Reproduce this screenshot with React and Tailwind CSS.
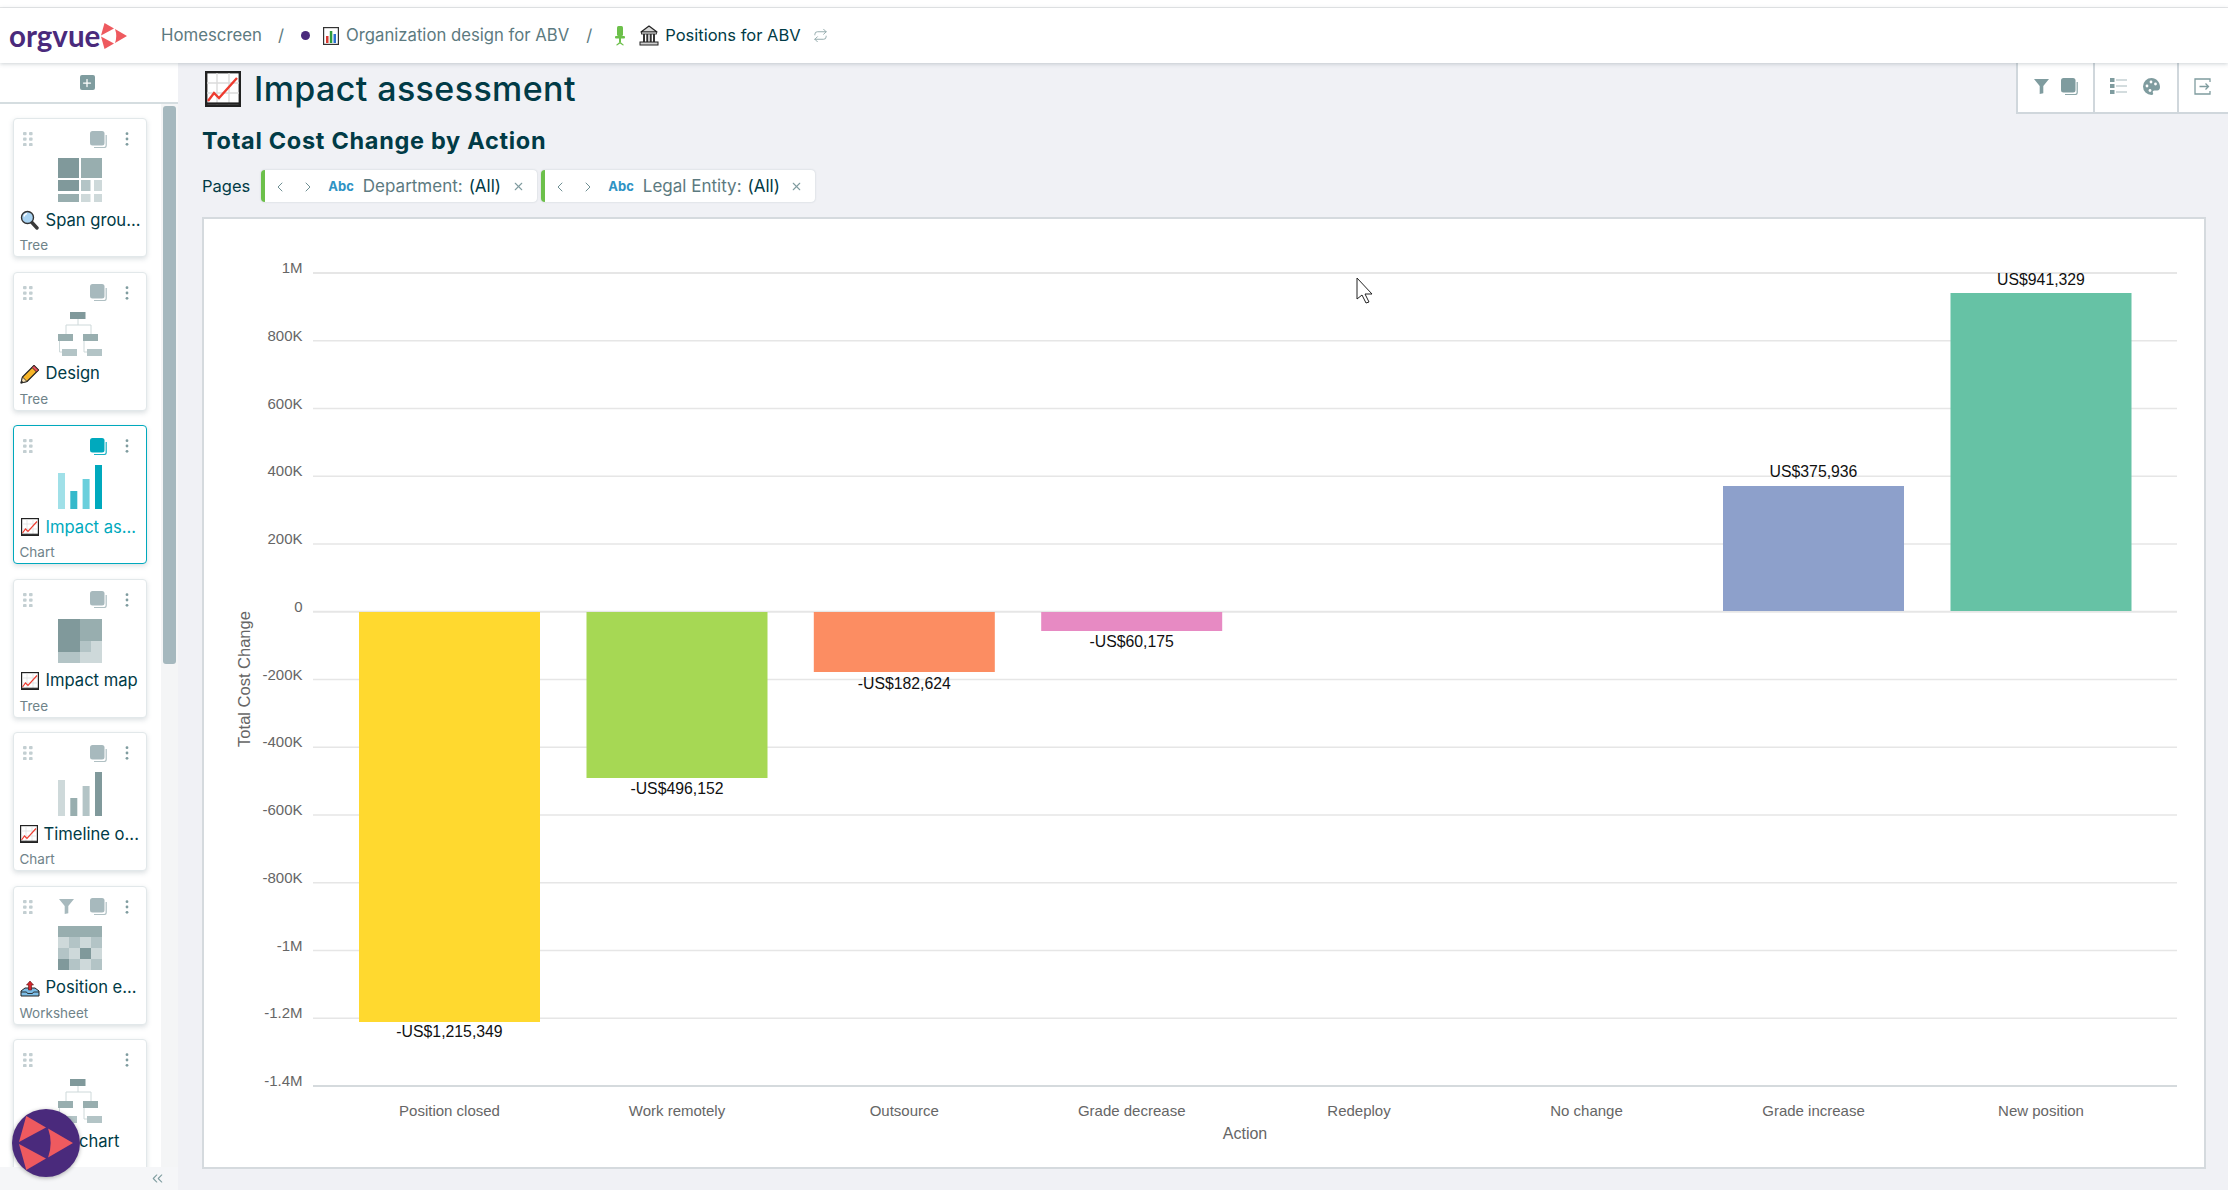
import { ChevronLeft, ChevronRight, ChevronsLeft, Plus, Repeat, X } from "lucide-react";

const D = "#80999b";
const M = "#98aeaf";
const L = "#b3c4c6";
const P = "#ced9da";

const gridLines = [
  ["1M", 273, 2], ["800K", 340.75], ["600K", 408.5], ["400K", 476.25], ["200K", 544], ["0", 611.75, 2],
  ["-200K", 679.5], ["-400K", 747.25], ["-600K", 815], ["-800K", 882.75], ["-1M", 950.5], ["-1.2M", 1018.25], ["-1.4M", 1086, 2],
];

const bars = [
  { name: "Position closed", color: "#ffd92f", x: 359, y: 612, h: 410, label: "-US$1,215,349", ly: 1037 },
  { name: "Work remotely", color: "#a6d854", x: 586.5, y: 612, h: 166, label: "-US$496,152", ly: 793.5 },
  { name: "Outsource", color: "#fc8d62", x: 813.8, y: 612, h: 60, label: "-US$182,624", ly: 688.5 },
  { name: "Grade decrease", color: "#e78ac3", x: 1041.2, y: 612, h: 19, label: "-US$60,175", ly: 647 },
  { name: "Redeploy", x: 1268.5 },
  { name: "No change", x: 1496 },
  { name: "Grade increase", color: "#8da0cb", x: 1723, y: 486, h: 125, label: "US$375,936", ly: 476.5 },
  { name: "New position", color: "#66c2a5", x: 1950.5, y: 293, h: 318, label: "US$941,329", ly: 284.5 },
];

function Grip() {
  return (
    <svg width="10" height="14" viewBox="0 0 10 14" fill="#c3cfd2">
      {[0, 5.5, 11].map((y) => (
        <g key={y}>
          <rect x="0" y={y} width="3.6" height="3.2" rx="1" />
          <rect x="6" y={y} width="3.6" height="3.2" rx="1" />
        </g>
      ))}
    </svg>
  );
}

function Copy({ color = "#a7b9bd", size = 17 }) {
  return (
    <svg width={size} height={size} viewBox="0 0 17 17">
      <path d="M16.2 4v10.5a2 2 0 0 1-2 2H4" fill="none" stroke={color} strokeOpacity="0.9" strokeWidth="1.2" />
      <rect x="0" y="0" width="14.5" height="14.5" rx="2.5" fill={color} />
    </svg>
  );
}

function Dots() {
  return (
    <svg width="4" height="14" viewBox="0 0 4 14" fill="#7f9c9f">
      <circle cx="2" cy="1.7" r="1.4" />
      <circle cx="2" cy="7" r="1.4" />
      <circle cx="2" cy="12.3" r="1.4" />
    </svg>
  );
}

function Funnel({ color = "#a7b9bd", w = 15, h = 15 }) {
  return (
    <svg width={w} height={h} viewBox="0 0 15 15">
      <path d="M0 0h15L9.3 7v7.2L5.7 15V7z" fill={color} />
    </svg>
  );
}

function ThumbTreemap() {
  return (
    <svg width="44" height="44" viewBox="0 0 44 44">
      <rect x="0" y="0" width="21" height="20" fill={D} />
      <rect x="23" y="0" width="21" height="20" fill={M} />
      <rect x="0" y="22" width="21" height="11" fill={D} />
      <rect x="23" y="22" width="9.5" height="11" fill={L} />
      <rect x="36" y="22" width="8" height="11" fill={P} />
      <rect x="0" y="36" width="21" height="8" fill={M} />
      <rect x="23" y="36" width="9.5" height="8" fill={P} />
      <rect x="36" y="36" width="8" height="8" fill={P} />
    </svg>
  );
}

function ThumbTree() {
  return (
    <svg width="44" height="44" viewBox="0 0 44 44">
      <path d="M20 7v6M8 22v-9h25v9M1.5 29v11h4M26 29v11h4" fill="none" stroke={P} strokeWidth="1" />
      <rect x="12" y="0" width="15.5" height="7" fill={D} />
      <rect x="0" y="22" width="15" height="7" fill={M} />
      <rect x="25" y="22" width="15" height="7" fill={M} />
      <rect x="4" y="37" width="15" height="7" fill={L} />
      <rect x="29" y="37" width="15" height="7" fill={L} />
    </svg>
  );
}

function ThumbBars({ colors = [P, M, L, D] }) {
  return (
    <svg width="44" height="44" viewBox="0 0 44 44">
      <rect x="0" y="8" width="7" height="36" fill={colors[0]} />
      <rect x="12.3" y="26" width="7" height="18" fill={colors[1]} />
      <rect x="24.6" y="14" width="7" height="30" fill={colors[2]} />
      <rect x="37" y="0" width="7" height="44" fill={colors[3]} />
    </svg>
  );
}

function ThumbMap() {
  return (
    <svg width="44" height="44" viewBox="0 0 44 44">
      <rect x="0" y="0" width="22" height="33" fill={D} />
      <rect x="22" y="0" width="22" height="22" fill={M} />
      <rect x="22" y="22" width="11" height="11" fill={L} />
      <rect x="33" y="22" width="11" height="11" fill={P} />
      <rect x="0" y="33" width="22" height="11" fill={L} />
      <rect x="22" y="33" width="22" height="11" fill={P} />
    </svg>
  );
}

function ThumbHeat() {
  const cells = [P, L, P, L, L, P, D, P, D, L, P, L];
  return (
    <svg width="44" height="44" viewBox="0 0 44 44">
      <rect x="0" y="0" width="44" height="11" fill={M} />
      {cells.map((c, i) => (
        <rect key={i} x={(i % 4) * 11} y={11 + Math.floor(i / 4) * 11} width="11" height="11" fill={c} />
      ))}
    </svg>
  );
}

function EmojiSearch() {
  return (
    <svg width="20" height="20" viewBox="0 0 20 20">
      <path d="M11.5 12l5.5 6" stroke="#3a3a3a" strokeWidth="3.4" strokeLinecap="round" />
      <circle cx="7.5" cy="7.5" r="6" fill="#a9d3f2" stroke="#333" strokeWidth="1.4" />
      <path d="M4 6.5a4 4 0 0 1 3-3" stroke="#fff" strokeWidth="1.4" fill="none" />
    </svg>
  );
}

function EmojiPencil() {
  return (
    <svg width="20" height="20" viewBox="0 0 20 20">
      <path d="M1 19l1.5-6L14 1.5 18.5 6 7 17.5z" fill="#f7b528" stroke="#222" strokeWidth="1.1" strokeLinejoin="round" />
      <path d="M14 1.5L18.5 6l-2 2L12 3.5z" fill="#e8505b" stroke="#222" strokeWidth="0.8" />
      <path d="M1 19l1.5-6L7 17.5z" fill="#f4dfb5" stroke="#222" strokeWidth="0.8" />
      <path d="M1 19l.6-2.6 2 2z" fill="#222" />
    </svg>
  );
}

function EmojiTrend({ size = 18 }) {
  return (
    <svg width={size} height={size} viewBox="0 0 18 18">
      <rect x="0.6" y="0.6" width="16.8" height="16.8" fill="#fff" stroke="#222" strokeWidth="1.2" />
      <path d="M1 6h16M1 11h16M6 1v16M12 1v16" stroke="#dcdcdc" strokeWidth="0.7" />
      <path d="M1.5 15l3-4 2.500 2.500L16 3.500" fill="none" stroke="#ee3b2f" strokeWidth="1.2" />
      <path d="M1 16.300h16" stroke="#222" strokeWidth="1.200" />
    </svg>
  );
}

function EmojiInbox() {
  return (
    <svg width="20" height="20" viewBox="0 0 20 20">
      <path d="M1 13l4-3h10l4 3v5H1z" fill="#7cbde6" stroke="#222" strokeWidth="1" />
      <path d="M1 14h5.500l1 1.500h5l1-1.500H19" fill="none" stroke="#222" strokeWidth="0.9" />
      <path d="M10 3l3.500 4h-2v5h-3V7h-2z" fill="#d3262c" stroke="#5a1012" strokeWidth="0.6" />
    </svg>
  );
}

function EmojiBarChart() {
  return (
    <svg width="16" height="18" viewBox="0 0 16 18">
      <rect x="0.6" y="0.6" width="14.8" height="16.800" fill="#fff" stroke="#333" strokeWidth="1.2" />
      <rect x="3" y="9" width="2.500" height="7" fill="#d93a32" />
      <rect x="6.800" y="4" width="2.500" height="12" fill="#2d9b3c" />
      <rect x="10.500" y="7" width="2.500" height="9" fill="#2b6fd0" />
    </svg>
  );
}

function EmojiBank() {
  return (
    <svg width="20" height="21" viewBox="0 0 20 21">
      <path d="M10 1L18 7H2z" fill="#d8d8d8" stroke="#222" strokeWidth="1.200" strokeLinejoin="round" />
      <rect x="2.500" y="7" width="15" height="2" fill="#e6e6e6" stroke="#222" strokeWidth="0.8" />
      <path d="M5 9v8M8.300 9v8M11.700 9v8M15 9v8" stroke="#333" strokeWidth="2" />
      <rect x="1" y="17" width="18" height="3" fill="#cfcfcf" stroke="#222" strokeWidth="1" />
    </svg>
  );
}

function Chair() {
  return (
    <svg width="12" height="20" viewBox="0 0 12 20" fill="#6cc04a">
      <rect x="3" y="0" width="6" height="10" rx="1.500" />
      <rect x="1" y="10" width="10" height="2.500" rx="1" />
      <rect x="5" y="12" width="2" height="4" />
      <path d="M2 19l3.500-3h1l3.500 3-1 .6L6 17.500 3 19.600z" />
    </svg>
  );
}

function LogoMark({ className }) {
  return (
    <svg className={className} viewBox="0 0 26 26" fill="#ee5a5f">
      <path d="M3.500 0L13 5.500 0 12.500z" />
      <path d="M0 13.500L13 20.500 3.500 26z" />
      <path d="M14 6L26 13 14 20Q16.500 13 14 6z" />
    </svg>
  );
}

function Card({ icon, label, type, thumb, active, filtered, noCopy, clipped }) {
  return (
    <div
      className={`flex h-[139px] w-[134px] shrink-0 flex-col rounded-[4px] border bg-white pl-[6px] pr-[7px] shadow-[0_2px_5px_rgba(90,115,125,0.22)] ${
        active ? "border-[#00a9bd]" : "border-[#e2e8ea]"
      } ${clipped ? "rounded-b-none" : ""}`}
    >
      <div className="mt-[12px] flex h-[16px] items-center">
        <div className="ml-[3px]">
          <Grip />
        </div>
        <div className="ml-auto flex items-center">
          {filtered && (
            <div className="mr-[16px]">
              <Funnel />
            </div>
          )}
          {!noCopy && <Copy color={active ? "#00a9bd" : "#a7b9bd"} />}
          <div className="ml-[18px] mr-[10px]">
            <Dots />
          </div>
        </div>
      </div>
      <div className="mt-[11px] ml-[38px] h-[44px]">{thumb}</div>
      <div className="mt-[7px] flex h-[22px] items-center gap-[6px] whitespace-nowrap">
        <div className="flex w-[20px] justify-center">{icon}</div>
        <span className={`text-[16.6px] leading-none ${active ? "text-[#00a9bd]" : "text-[#013b46]"}`}>{label}</span>
      </div>
      {type && <div className="mt-[8px] text-[13.5px] leading-none text-[#6f8389]">{type}</div>}
    </div>
  );
}

function Pill({ label, width }) {
  return (
    <div className={`flex h-[32px] items-center rounded-[4px] border-l-[4px] border-[#6cc04a] bg-white pl-[7px] pt-[1px] shadow-[0_0_2px_rgba(90,115,125,0.3)] ${width}`}>
      <ChevronLeft size={16} strokeWidth={1.5} className="text-[#6f8f93]" />
      <ChevronRight size={16} strokeWidth={1.5} className="ml-[12px] text-[#6f8f93]" />
      <span className="ml-[12px] text-[13px] font-bold text-[#2f93c4]">Abc</span>
      <span className="ml-[9px] text-[17px] text-[#5c7a80]">{label}:</span>
      <span className="ml-[6px] text-[17px] text-[#013b46]">(All)</span>
      <X size={13} strokeWidth={2} className="ml-auto mr-[12px] text-[#7f9c9f]" />
    </div>
  );
}

function Chart() {
  return (
    <svg width="2000" height="948" viewBox="204 219 2000 948" fontFamily="'Liberation Sans', Arial, sans-serif">
      {gridLines.map(([label, y, weight]) => (
        <g key={label}>
          <line x1="313" x2="2177" y1={y} y2={y} stroke={label === "-1.4M" ? "#d5dadd" : "#e6e6e6"} strokeWidth={weight || 1.4} />
          <text x="302.500" y={y} textAnchor="end" fontSize="15" fill="#666">
            {label}
          </text>
        </g>
      ))}
      {bars.map((b) => (
        <g key={b.name}>
          {b.color && <rect x={b.x} y={b.y} width="181" height={b.h} fill={b.color} />}
          {b.label && (
            <text x={b.x + 90.5} y={b.ly} textAnchor="middle" fontSize="15.800" fill="#111">
              {b.label}
            </text>
          )}
          <text x={b.x + 90.5} y="1116" textAnchor="middle" fontSize="15" fill="#666">
            {b.name}
          </text>
        </g>
      ))}
      <text x="1245" y="1139" textAnchor="middle" fontSize="16" fill="#666">
        Action
      </text>
      <text transform="translate(250 679) rotate(-90)" textAnchor="middle" fontSize="16.500" fill="#666">
        Total Cost Change
      </text>
    </svg>
  );
}

export default function App() {
  return (
    <div className="relative flex h-[1190px] w-[2228px] flex-col overflow-hidden bg-[#f0f1f5] font-['Inter',sans-serif]">
      <div className="h-[8px] shrink-0 border-b border-[#e8e9ea] bg-white" />
      <header className="relative z-10 flex h-[55px] shrink-0 items-center bg-white shadow-[0_1px_4px_rgba(60,80,90,0.25)]">
        <div className="ml-[9px] flex items-center">
          <span className="w-[89px] font-['Lato',sans-serif] text-[29.5px] font-bold leading-none text-[#4a2a7c]">orgvue</span>
          <LogoMark className="ml-[3px] h-[26px] w-[26px]" />
        </div>
        <span className="ml-[34px] text-[16.8px] text-[#5c7a80]">Homescreen</span>
        <span className="ml-[16px] text-[16.8px] text-[#5c7a80]">/</span>
        <span className="ml-[17px] h-[9px] w-[9px] rounded-full bg-[#4a2a7c]" />
        <div className="ml-[13px]">
          <EmojiBarChart />
        </div>
        <span className="ml-[7px] text-[16.7px] text-[#5c7a80]">Organization design for ABV</span>
        <span className="ml-[17px] text-[16.8px] text-[#5c7a80]">/</span>
        <div className="ml-[22px]">
          <Chair />
        </div>
        <div className="ml-[13px]">
          <EmojiBank />
        </div>
        <span className="ml-[6px] text-[16.5px] text-[#013b46]">Positions for ABV</span>
        <Repeat size={15} strokeWidth={1.5} className="ml-[12px] text-[#8fa6a9]" />
      </header>

      <div className="flex min-h-0 flex-1">
        <aside className="relative flex w-[178px] shrink-0 flex-col bg-white">
          <div className="flex h-[41px] shrink-0 items-center justify-center border-b-2 border-[#d5dde0] pr-[4px]">
            <div className="flex h-[15px] w-[15px] items-center justify-center rounded-[2px] bg-[#7f9c9f]">
              <Plus size={12} strokeWidth={2.5} className="text-white" />
            </div>
          </div>
          <div className="flex min-h-0 flex-1">
            <div className="flex w-[161px] flex-col gap-[14.5px] overflow-hidden pl-[12.5px] pt-[14px]">
              <Card icon={<EmojiSearch />} label="Span grou..." type="Tree" thumb={<ThumbTreemap />} />
              <Card icon={<EmojiPencil />} label="Design" type="Tree" thumb={<ThumbTree />} />
              <Card
                icon={<EmojiTrend />}
                label="Impact as..."
                type="Chart"
                active
                thumb={<ThumbBars colors={["#a0e0e8", "#35b9cb", "#6acfdc", "#00a9bd"]} />}
              />
              <Card icon={<EmojiTrend />} label="Impact map" type="Tree" thumb={<ThumbMap />} />
              <Card icon={<EmojiTrend />} label="Timeline o..." type="Chart" thumb={<ThumbBars />} />
              <Card icon={<EmojiInbox />} label="Position e..." type="Worksheet" filtered thumb={<ThumbHeat />} />
              <Card icon={<EmojiTrend />} label="Org chart" noCopy clipped thumb={<ThumbTree />} />
            </div>
            <div className="w-[17px] bg-[#f4f5f6] pl-[2px] pt-[2px]">
              <div className="h-[558px] w-[13px] rounded-[3px] bg-[#a5b8be]" />
            </div>
          </div>
          <div className="flex h-[23px] shrink-0 items-center justify-end bg-[#f5f6f8] pr-[12px]">
            <ChevronsLeft size={17} strokeWidth={1.5} className="text-[#7f9c9f]" />
          </div>
          <div className="absolute bottom-[13px] left-[12px] flex h-[68px] w-[68px] items-center justify-center rounded-full bg-[#4a2a7c] shadow-[0_1px_4px_rgba(0,0,0,0.3)]">
            <LogoMark className="h-[54px] w-[54px]" />
          </div>
        </aside>

        <main className="flex min-w-0 flex-1 flex-col">
          <div className="flex h-[51px] shrink-0">
            <div className="ml-[27px] mt-[8px] flex h-[36px] items-center">
              <EmojiTrend size={36} />
              <h1 className="ml-[13px] text-[34px] font-medium leading-none tracking-[0.4px] text-[#013b46]">Impact assessment</h1>
            </div>
            <div className="ml-auto flex h-[51px] w-[212px] border-b-2 border-l-2 border-[#d0d7dc] bg-white">
              <div className="flex w-[77px] items-center gap-[12px] border-r-2 border-[#d0d7dc] pb-[3px] pl-[16px]">
                <Funnel color="#7f9c9f" />
                <Copy color="#7f9c9f" />
              </div>
              <div className="flex w-[84px] items-center gap-[16px] border-r-2 border-[#d0d7dc] pb-[3px] pl-[15px]">
                <svg width="17" height="16" viewBox="0 0 17 16">
                  <g fill="#7f9c9f">
                    <rect x="0" y="0" width="4.500" height="4" />
                    <rect x="0" y="6" width="4.500" height="4" />
                    <rect x="0" y="12" width="4.500" height="4" />
                  </g>
                  <path d="M6 2h11M6 8h11M6 14h11" stroke="#a7b9bd" strokeWidth="1.200" />
                </svg>
                <svg width="17" height="17" viewBox="0 0 17 17">
                  <path d="M8.500 0a8.500 8.500 0 0 0 0 17c1.800 0 2-1.200 1.400-2.200-.6-1.200.1-2.300 1.500-2.300h2.800c1.800 0 2.800-1.400 2.800-3.500C17 4 13.300 0 8.500 0z" fill="#7f9c9f" />
                  <circle cx="4" cy="8" r="1.400" fill="#fff" />
                  <circle cx="8" cy="4" r="1.400" fill="#fff" />
                  <circle cx="12.500" cy="6" r="1.400" fill="#fff" />
                  <circle cx="7" cy="12.500" r="1.400" fill="#fff" />
                </svg>
              </div>
              <div className="flex flex-1 items-center pb-[3px] pl-[15px]">
                <svg width="17" height="17" viewBox="0 0 17 17" fill="none" stroke="#7f9c9f" strokeWidth="1.300">
                  <path d="M16 4V1H1v15h15v-3" />
                  <path d="M5.500 8.500h9M11.500 5.500l3 3-3 3" />
                </svg>
              </div>
            </div>
          </div>
          <h2 className="ml-[24px] mt-[13px] whitespace-nowrap text-[23.5px] font-bold leading-[28px] tracking-[0.7px] text-[#013b46]">Total Cost Change by Action</h2>
          <div className="ml-[24px] mt-[15px] flex h-[32px] items-center">
            <span className="mr-[11px] text-[16.5px] text-[#013b46]">Pages</span>
            <Pill label="Department" width="w-[276px]" />
            <div className="w-[4px]" />
            <Pill label="Legal Entity" width="w-[274px]" />
          </div>
          <div className="ml-[24px] mt-[15px] h-[952px] w-[2004px] border-2 border-[#d5dade] bg-white">
            <Chart />
          </div>
        </main>
      </div>

      <svg className="absolute left-[1356px] top-[277px]" width="19" height="27" viewBox="0 0 19 27">
        <path d="M1 1v21l5-4 4 8 3-1-4-8h7z" fill="#fff" stroke="#222" strokeWidth="1" strokeLinejoin="round" />
      </svg>
    </div>
  );
}
